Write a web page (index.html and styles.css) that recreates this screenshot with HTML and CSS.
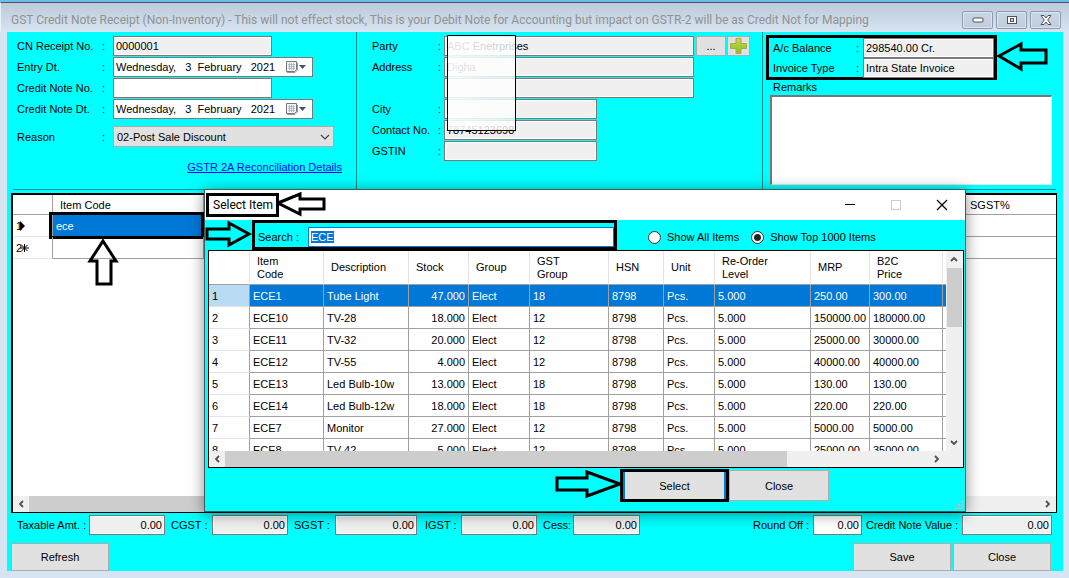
FILE: index.html
```html
<!DOCTYPE html>
<html lang="en">
<head>
<meta charset="utf-8">
<title>GST Credit Note Receipt</title>
<link rel="stylesheet" href="styles.css">
</head>
<body>
<div class="window">
  <header class="titlebar">
    <h1 class="title">GST Credit Note Receipt (Non-Inventory) - This will not effect stock, This is your Debit Note for Accounting but impact on GSTR-2 will be as Credit Not for Mapping</h1>
    <div class="caption-buttons">
      <button class="caption" aria-label="Minimize"><svg width="12" height="7" viewBox="0 0 12 7"><rect x="1" y="1" width="10" height="4" rx="1" fill="#fff" stroke="#4d5260"/></svg></button>
      <button class="caption" aria-label="Restore"><svg width="12" height="10" viewBox="0 0 12 10"><rect x="1.5" y="1.5" width="9" height="7" fill="#fff" stroke="#4d5260"/><rect x="4.5" y="3.5" width="3" height="3" fill="#d0dae5" stroke="#4d5260"/></svg></button>
      <button class="caption" aria-label="Close window"><svg width="12" height="10" viewBox="0 0 12 10"><path d="M1 .5h3l2 2.5 2-2.500h3L7.700 5l3.300 4.500h-3L6 7 4 9.500H1L4.300 5z" fill="#fff" stroke="#4d5260"/></svg></button>
    </div>
  </header>

  <main class="client">
    <section class="form">
      <div class="col receipt">
        <div class="row"><label for="cn">CN Receipt No.</label><i>:</i><input class="box w160" id="cn" value="0000001" readonly></div>
        <div class="row"><label for="entry">Entry Dt.</label><i>:</i>
          <div class="box date"><input id="entry" value="Wednesday,   3  February   2021"><button aria-label="Pick entry date"><svg width="22" height="14" viewBox="0 0 22 14"><path d="M1.500 1.500h10v8l-2 2h-8z" fill="#f3f4f7" stroke="#77747a"/><path d="M3 4.500h7M3 6.500h7M3 8.500h7M4.500 3v7M6.500 3v7M8.500 3v7" stroke="#aab0c0" stroke-width=".8"/><path d="M2 12.500h8l2.500-2.500V3" fill="none" stroke="#999"/><path d="M14 5h7l-3.500 4z" fill="#44546f"/></svg></button></div></div>
        <div class="row"><label for="cnn">Credit Note No.</label><i>:</i><input class="box white w160" id="cnn"></div>
        <div class="row"><label for="cnd">Credit Note Dt.</label><i>:</i>
          <div class="box date"><input id="cnd" value="Wednesday,   3  February   2021"><button aria-label="Pick note date"><svg width="22" height="14" viewBox="0 0 22 14"><path d="M1.500 1.500h10v8l-2 2h-8z" fill="#f3f4f7" stroke="#77747a"/><path d="M3 4.500h7M3 6.500h7M3 8.500h7M4.500 3v7M6.500 3v7M8.500 3v7" stroke="#aab0c0" stroke-width=".8"/><path d="M2 12.500h8l2.500-2.500V3" fill="none" stroke="#999"/><path d="M14 5h7l-3.500 4z" fill="#44546f"/></svg></button></div></div>
        <div class="row reason"><label for="reason">Reason</label><i>:</i>
          <div class="select-wrap"><select id="reason"><option>02-Post Sale Discount</option></select><svg class="chev" width="10" height="6" viewBox="0 0 10 6"><path d="M1 1l4 4 4-4" fill="none" stroke="#444" stroke-width="1.200"/></svg></div></div>
        <a class="link" href="#">GSTR 2A Reconciliation Details</a>
      </div>

      <div class="col party">
        <div class="row"><label for="party">Party</label><i>:</i><input class="box w250" id="party" value="ABC Enetrprises" readonly>
          <button class="btn dots" aria-label="Browse parties">...</button>
          <button class="btn plus" aria-label="Add party"><svg width="17" height="16" viewBox="0 0 17 16"><defs><linearGradient id="pg" x2="0" y2="1"><stop offset="0" stop-color="#c5dc4c"/><stop offset="1" stop-color="#8fbc1b"/></linearGradient></defs><path d="M6 .5h5v5h5.500v5H11v5H6v-5H.5v-5H6z" fill="url(#pg)" stroke="#9dad57"/></svg></button></div>
        <div class="row"><label for="addr">Address</label><i>:</i><input class="box w250" id="addr" value="Digha" readonly></div>
        <div class="row"><span class="label"></span><i></i><input class="box w250" aria-label="Address line 2" readonly></div>
        <div class="row"><label for="city">City</label><i>:</i><input class="box w154" id="city" readonly></div>
        <div class="row"><label for="phone">Contact No.</label><i>:</i><input class="box w154" id="phone" value="78745123698" readonly></div>
        <div class="row"><label for="gstin">GSTIN</label><i>:</i><input class="box w154" id="gstin" readonly></div>
        <div class="mask"></div>
      </div>

      <div class="col account">
        <div class="frame">
          <div class="row"><label for="bal">A/c Balance</label><i>:</i><input class="box grow" id="bal" value="298540.00 Cr." readonly></div>
          <div class="row"><label for="inv">Invoice Type</label><i>:</i><input class="box grow" id="inv" value="Intra State Invoice" readonly></div>
          <svg class="arrow a-balance" width="51" height="32" viewBox="0 0 51 32"><path d="M2 15L24 3v6h25v13H24v6z"/></svg>
        </div>
        <label class="remarks-label" for="remarks">Remarks</label>
        <textarea id="remarks" class="remarks"></textarea>
      </div>
    </section>

    <section class="sheet">
      <table class="items">
        <colgroup><col class="c-head"><col class="c-code"><col><col class="c-sgst"></colgroup>
        <thead><tr><th></th><th>Item Code</th><th></th><th>SGST%</th></tr></thead>
        <tbody>
          <tr><td class="rh">1<svg class="mark" width="8" height="10" viewBox="0 0 8 10"><path d="M2 0l5 5-5 5z"/></svg></td><td class="current">ece<span class="cell-frame"></span><svg class="arrow a-cell" width="34" height="48" viewBox="0 0 34 48"><path d="M17 2l13 20h-5v23H11V22H4z"/></svg></td><td></td><td></td></tr>
          <tr><td class="rh">2<svg class="mark star" width="9" height="10" viewBox="0 0 9 10"><path d="M4.500 1v8M0 5h9M1.500 2l6 6M7.500 2l-6 6" stroke="#000"/></svg></td><td></td><td></td><td></td></tr>
        </tbody>
      </table>
      <div class="hscroll"><svg class="sa" viewBox="0 0 8 8"><path d="M6 1L3 4l3 3"/></svg><div class="thumb outer"></div><svg class="sa" viewBox="0 0 8 8"><path d="M2 1l3 3-3 3"/></svg></div>
    </section>

    <section class="totals">
      <label class="l72" for="t1">Taxable Amt. :</label><input class="box i76" id="t1" value="0.00" readonly>
      <label class="l41" for="t2">CGST :</label><input class="box i76" id="t2" value="0.00" readonly>
      <label class="l41" for="t3">SGST :</label><input class="box i82" id="t3" value="0.00" readonly>
      <label class="l36" for="t4">IGST :</label><input class="box i76" id="t4" value="0.00" readonly>
      <label class="l30" for="t5">Cess:</label><input class="box i67" id="t5" value="0.00" readonly>
      <label class="l60" for="t6">Round Off :</label><input class="box white i48" id="t6" value="0.00">
      <label class="l96" for="t7">Credit Note Value :</label><input class="box i90" id="t7" value="0.00" readonly>
    </section>
    <section class="actions"><button class="btn">Refresh</button><button class="btn save">Save</button><button class="btn">Close</button></section>
  </main>
</div>

<div class="dialog" role="dialog" aria-label="Select Item">
  <div class="dlg-title">
    <h2>Select Item</h2>
    <svg class="arrow white a-title" width="50" height="26" viewBox="0 0 50 26"><path d="M2 12L24 3v5h24v10H24v5z"/></svg>
    <div class="dlg-controls">
      <button aria-label="Minimize dialog"><svg width="12" height="12" viewBox="0 0 12 12"><path d="M1 5.500h10" stroke="#000"/></svg></button>
      <button aria-label="Maximize dialog" disabled><svg width="12" height="12" viewBox="0 0 12 12"><rect x="1.500" y="1.500" width="9" height="9" fill="none" stroke="#ccc"/></svg></button>
      <button aria-label="Close dialog"><svg width="12" height="12" viewBox="0 0 12 12"><path d="M1 1l10 10M11 1L1 11" stroke="#000" stroke-width="1.200"/></svg></button>
    </div>
  </div>
  <div class="search">
    <svg class="arrow a-search" width="48" height="30" viewBox="0 0 48 30"><path d="M2 9h22V3l20 11-20 11v-6H2z"/></svg>
    <div class="search-frame"><label for="q">Search :</label><input id="q" value="ECE"></div>
    <label class="radio r-all"><input type="radio" name="show">Show All Items</label>
    <label class="radio"><input type="radio" name="show" checked>Show Top 1000 Items</label>
  </div>
  <div class="picker">
    <div class="picker-main">
      <div class="rows">
        <table class="data">
          <colgroup><col class="d41"><col class="d74"><col class="d85"><col class="d60"><col class="d61"><col class="d79"><col class="d55"><col class="d51"><col class="d96"><col class="d59"><col class="d73"><col></colgroup>
          <thead><tr><th></th><th>Item<br>Code</th><th>Description</th><th>Stock</th><th>Group</th><th>GST<br>Group</th><th>HSN</th><th>Unit</th><th>Re-Order<br>Level</th><th>MRP</th><th>B2C<br>Price</th><th></th></tr></thead>
          <tbody>
            <tr class="sel"><td>1</td><td>ECE1</td><td>Tube Light</td><td class="num">47.000</td><td>Elect</td><td>18</td><td>8798</td><td>Pcs.</td><td>5.000</td><td>250.00</td><td>300.00</td><td></td></tr>
            <tr><td>2</td><td>ECE10</td><td>TV-28</td><td class="num">18.000</td><td>Elect</td><td>12</td><td>8798</td><td>Pcs.</td><td>5.000</td><td>150000.00</td><td>180000.00</td><td></td></tr>
            <tr><td>3</td><td>ECE11</td><td>TV-32</td><td class="num">20.000</td><td>Elect</td><td>12</td><td>8798</td><td>Pcs.</td><td>5.000</td><td>25000.00</td><td>30000.00</td><td></td></tr>
            <tr><td>4</td><td>ECE12</td><td>TV-55</td><td class="num">4.000</td><td>Elect</td><td>12</td><td>8798</td><td>Pcs.</td><td>5.000</td><td>40000.00</td><td>40000.00</td><td></td></tr>
            <tr><td>5</td><td>ECE13</td><td>Led Bulb-10w</td><td class="num">13.000</td><td>Elect</td><td>18</td><td>8798</td><td>Pcs.</td><td>5.000</td><td>130.00</td><td>130.00</td><td></td></tr>
            <tr><td>6</td><td>ECE14</td><td>Led Bulb-12w</td><td class="num">18.000</td><td>Elect</td><td>18</td><td>8798</td><td>Pcs.</td><td>5.000</td><td>220.00</td><td>220.00</td><td></td></tr>
            <tr><td>7</td><td>ECE7</td><td>Monitor</td><td class="num">27.000</td><td>Elect</td><td>12</td><td>8798</td><td>Pcs.</td><td>5.000</td><td>5000.00</td><td>5000.00</td><td></td></tr>
            <tr><td>8</td><td>ECE8</td><td>TV-42</td><td class="num">5.000</td><td>Elect</td><td>12</td><td>8798</td><td>Pcs.</td><td>5.000</td><td>25000.00</td><td>35000.00</td><td></td></tr>
          </tbody>
        </table>
      </div>
      <div class="vscroll"><svg class="sa" viewBox="0 0 8 8"><path d="M1 6l3-3 3 3"/></svg><div class="vthumb"></div><svg class="sa down" viewBox="0 0 8 8"><path d="M1 2l3 3 3-3"/></svg></div>
    </div>
    <div class="hscroll inner"><svg class="sa" viewBox="0 0 8 8"><path d="M6 1L3 4l3 3"/></svg><div class="thumb in"></div><svg class="sa last" viewBox="0 0 8 8"><path d="M2 1l3 3-3 3"/></svg></div>
  </div>
  <div class="dlg-actions">
    <svg class="arrow a-select" width="68" height="32" viewBox="0 0 68 32"><path d="M2 10h30V4l33 12-33 12v-6H2z"/></svg>
    <div class="select-frame"><button class="btn default">Select</button></div>
    <button class="btn dlg-close">Close</button>
    <svg class="grip" width="10" height="9" viewBox="0 0 10 9" fill="#c4b8b8"><path d="M7 0h2v2H7zM4 3h2v2H4zM7 3h2v2H7zM1 6h2v2H1zM4 6h2v2H4zM7 6h2v2H7z"/></svg>
  </div>
</div>
<script src="main.js"></script>
</body>
</html>
```

FILE: styles.css
```css
* { box-sizing: border-box; }
body { margin: 0; position: relative; min-height: 100vh; font: 11px/14px "Liberation Sans", Arial, sans-serif; color: #000; }
input, select, textarea, button { font: inherit; color: inherit; margin: 0; }
button { padding: 0; }
h1, h2 { margin: 0; font-weight: normal; }
i { font-style: normal; }

.window { min-height: 100vh; display: flex; flex-direction: column; padding: 0 6px 7px 7px; background: #d7e4f2; border-top: 2px solid #6dbdf0; }
.titlebar { display: flex; align-items: center; justify-content: space-between; height: 30px; margin: 0 -6px 0 -7px; padding: 5px 8px 0 10px; border-top: 1px solid #46525e; border-left: 1px solid #e8f0f8; background: linear-gradient(#bccad9, #d7e4f2); }
.title { font: 12px/18px Roboto, "Noto Sans", sans-serif; color: #929292; white-space: nowrap; }
.caption-buttons { display: flex; gap: 3px; flex: none; }
.caption { width: 31px; height: 18px; display: flex; align-items: center; justify-content: center; border: 1px solid #8c9bb0; border-radius: 2px; background: linear-gradient(#cbd6e3, #c1cddc); box-shadow: inset 0 0 0 1px #dce5ef; }

.client { flex: 1; display: flex; flex-direction: column; background: #0ff; }
.form { display: flex; height: 158px; margin: 0 7px 0 6px; border-bottom: 1px solid #008c8c; }
.col { position: relative; padding-top: 3px; }
.row { display: flex; align-items: center; height: 21px; }
.box { height: 20px; border: 1px solid #7a7a7a; background: #f0f0f0; padding: 0 2px; box-shadow: inset 0 0 0 1px #fff; border-radius: 0; outline: none; min-width: 0; }
.white { background: #fff; }
.w160 { width: 159px; }
.w250 { width: 250px; }
.w154 { width: 153px; }
.receipt { width: 344px; padding-left: 4px; border-right: 1px solid #008c8c; }
.receipt label { width: 85px; }
.receipt i { width: 11px; }
.date { display: flex; align-items: center; width: 200px; background: #fff; }
.date input { flex: 1; min-width: 0; border: 0; padding: 0; background: none; outline: none; }
.date button { border: 0; background: none; height: 14px; margin-right: 3px; }
.date svg { display: block; }
.reason { height: 21px; margin-top: 7px; }
.select-wrap { position: relative; width: 221px; }
.select-wrap select { width: 100%; height: 21px; appearance: none; border: 1px solid #adadad; border-radius: 0; background: #e1e1e1; padding: 0 3px; }
.chev { position: absolute; right: 4px; top: 8px; }
.link { display: block; margin-top: 13px; padding-right: 14px; text-align: right; color: #00f; }
.party { width: 405px; padding-left: 15px; }
.party label, .party .label { width: 66px; }
.party i { width: 6px; }
.btn { height: 28px; width: 98px; border: 1px solid #adadad; background: #e1e1e1; }
.dots { width: 30px; height: 20px; margin-left: 2px; }
.plus { width: 23px; height: 20px; margin-left: 1px; display: flex; align-items: center; justify-content: center; }
.mask { position: absolute; left: 90px; top: 3px; width: 69px; height: 96px; border: 1px solid #000; background: linear-gradient(90deg, rgba(255,255,255,.9), rgba(255,255,255,.78)); }
.account { flex: 1; padding-left: 3px; border-left: 1px solid #008c8c; }
.frame { position: relative; width: 231px; height: 45px; border: 3px solid #000; padding-left: 4px; }
.frame .row { height: 20px; }
.frame label { width: 83px; }
.frame i { width: 7px; }
.grow { flex: 1; }
.remarks-label { display: block; padding-left: 7px; line-height: 15px; }
.remarks { display: block; width: calc(100% - 8px); height: 90px; margin-left: 4px; border: 1px solid #e3e3e3; border-top: 2px solid #777; border-left: 2px solid #777; resize: none; outline: none; background: #fff; }

.arrow { position: absolute; z-index: 3; fill: none; stroke: #000; stroke-width: 3; }
.arrow.white { fill: #fff; background: none; }
.a-balance { left: 228px; top: 3px; }
.a-cell { left: 33px; top: 24px; }
.a-title { left: 71px; top: 1px; }
.a-search { left: 0; top: 0; }
.a-select { left: 350px; top: 0; }

.sheet { flex: 1; display: flex; flex-direction: column; justify-content: space-between; margin: 3px 6px 0 4px; border: 2px solid #000; border-right-width: 1px; border-bottom-width: 1px; background: #fff; }
.items, .data { width: 100%; table-layout: fixed; border-collapse: separate; border-spacing: 0; }
.items th { height: 20px; padding: 0 7px; text-align: left; font-weight: normal; border-right: 1px solid #a0a0a0; border-bottom: 1px solid #a0a0a0; }
.items td { position: relative; height: 22px; padding: 0 3px; border-right: 1px solid #a0a0a0; border-bottom: 1px solid #a0a0a0; }
.items th:last-child, .items td:last-child { border-right: 0; padding-left: 4px; }
.items td.rh { border-bottom-color: #e5e5e5; }
.c-head { width: 40px; }
.c-code { width: 151px; }
.c-sgst { width: 90px; }
.items td.current { background: #0078d7; color: #fff; }
.cell-frame { position: absolute; inset: -3px -1px -3px -4px; border: 3px solid #000; }
.mark { position: absolute; left: 5px; top: 6px; }
.star { left: 7px; }
.hscroll { display: flex; align-items: center; height: 16px; background: #f0f0f0; }
.sa { width: 8px; height: 8px; margin: 0 4px; flex: none; fill: none; stroke: #505050; stroke-width: 1.8; }
.thumb { height: 16px; background: #cdcdcd; }
.outer { width: 700px; margin-right: auto; }
.in { width: 562px; margin-right: auto; }
.last { margin-right: 22px; }

.totals { display: flex; align-items: center; height: 22px; margin-top: 1px; padding: 0 11px 0 10px; }
.totals label { white-space: nowrap; margin-left: 6px; }
.totals .box { text-align: right; }
.totals .l72 { width: 72px; margin-left: 0; }
.l41 { width: 41px; }
.totals .l36 { width: 36px; margin-left: 8px; }
.totals .l30 { width: 30px; }
.totals .l60 { width: 60px; margin-left: auto; }
.totals .l96 { width: 96px; margin-left: 4px; }
.i76 { width: 76px; }
.i82 { width: 82px; }
.i67 { width: 67px; }
.i48 { width: 49px; }
.i90 { width: 90px; }
.actions { display: flex; gap: 2px; margin-top: 7px; padding: 0 12px 0 4px; }
.save { margin-left: auto; }

.dialog { position: absolute; left: 204px; top: 189px; width: 762px; border: 1px solid #3e5c5c; background: #0ff; box-shadow: 0 2px 14px rgba(0,0,0,.45); }
.dlg-title { position: relative; display: flex; justify-content: space-between; align-items: center; height: 30px; background: #fff; }
.dlg-title h2 { font: 12px/18px Roboto, "Noto Sans", sans-serif; border: 3px solid #000; width: 73px; height: 24px; padding: 0 4px; margin-left: 1px; white-space: nowrap; }
.dlg-controls { display: flex; }
.dlg-controls button { width: 46px; height: 28px; border: 0; background: none; display: flex; align-items: center; justify-content: center; }
.search { position: relative; display: flex; align-items: center; height: 30px; padding-left: 47px; }
.search-frame { display: flex; align-items: center; width: 365px; height: 30px; border: 3px solid #000; padding: 3px 0 0 3px; }
.search-frame label { width: 50px; }
.search-frame input { flex: 1; height: 20px; min-width: 0; border: 1px solid #0078d7; outline: none; background: #fff; padding: 0 2px; }
.search-frame input::selection { background: #0078d7; color: #fff; }
.radio { display: flex; align-items: center; padding-top: 4px; margin-left: 12px; gap: 6px; }
.r-all { margin-left: 31px; }
.radio input { appearance: none; width: 13px; height: 13px; border: 1px solid #333; border-radius: 50%; background: #fff; }
.radio input:checked { background: radial-gradient(circle, #222 0 3px, #fff 4px); }
.picker { margin: 0 1px 0 3px; height: 218px; border: 1px solid #000; background: #fff; display: flex; flex-direction: column; }
.picker-main { flex: 1; min-height: 0; display: flex; }
.rows { flex: 1; min-width: 0; overflow: hidden; }
.data th { height: 34px; padding: 0 7px; text-align: left; font-weight: normal; line-height: 13px; border-right: 1px solid #e5e5e5; border-bottom: 1px solid #a0a0a0; }
.data td { height: 22px; padding: 0 3px; white-space: nowrap; border-right: 1px solid #a0a0a0; border-bottom: 1px solid #a0a0a0; }
.data td:first-child { border-bottom-color: #e5e5e5; }
.data td:last-child, .data th:last-child { border-right: 0; padding: 0; }
.data .sel td { background: #0078d7; color: #fff; }
.data .sel td:first-child { background: #b9dcf4; color: #000; }
.data .num { text-align: right; }
.d41 { width: 41px; }
.d74 { width: 74px; }
.d85 { width: 85px; }
.d60 { width: 60px; }
.d61 { width: 61px; }
.d79 { width: 79px; }
.d55 { width: 55px; }
.d51 { width: 51px; }
.d96 { width: 96px; }
.d59 { width: 59px; }
.d73 { width: 73px; }
.vscroll { width: 17px; display: flex; flex-direction: column; background: #f0f0f0; padding-top: 4px; }
.vthumb { height: 59px; margin: 5px 1px 0; background: #cdcdcd; }
.down { margin: auto 4px 4px; }
.dlg-actions { position: relative; display: flex; height: 43px; padding-left: 415px; }
.select-frame { display: flex; width: 109px; height: 33px; margin-top: 1px; border: 3px solid #000; }
.default { flex: 1; height: auto; border: 0; border-left: 2px solid #0078d7; border-right: 2px solid #0078d7; }
.dlg-close { width: 100px; height: 31px; margin-top: 2px; }
.grip { position: absolute; right: 1px; bottom: 1px; }
```

FILE: main.js
```js
const search = document.getElementById('q');
search.focus();
search.select();
```
